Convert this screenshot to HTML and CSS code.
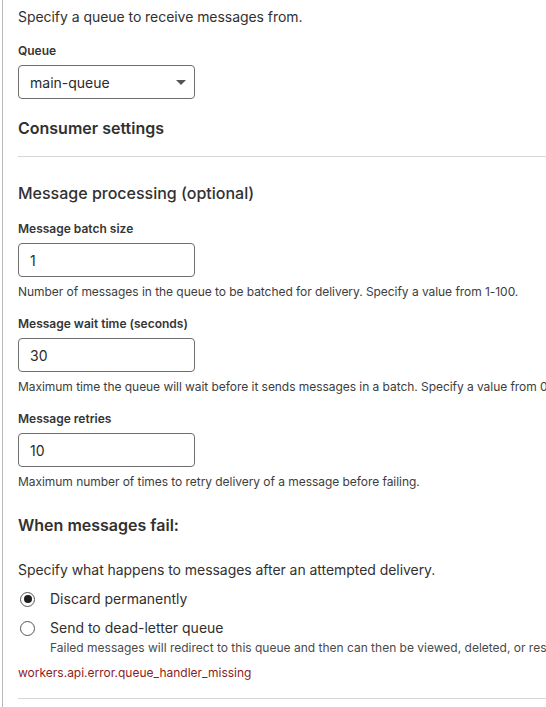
FILE: index.html
```html
<!DOCTYPE html>
<html>
<head>
<meta charset="utf-8">
<link rel="stylesheet" href="styles.css">
</head>
<body>
<div class="panel">
  <p class="intro">Specify a queue to receive messages from.</p>
  <div class="label lbl-queue">Queue</div>
  <div class="select">
    <span>main-queue</span>
    <svg class="caret" width="10" height="5" viewBox="0 0 10 5"><path d="M0 0 H10 L5 5 Z" fill="#555"/></svg>
  </div>
  <h2 class="h-consumer">Consumer settings</h2>
  <div class="divider d1"></div>
  <h2 class="h-proc">Message processing (optional)</h2>

  <div class="field">
    <div class="label">Message batch size</div>
    <div class="input">1</div>
    <div class="help">Number of messages in the queue to be batched for delivery. Specify a value from 1-100.</div>
  </div>
  <div class="field">
    <div class="label">Message wait time (seconds)</div>
    <div class="input">30</div>
    <div class="help">Maximum time the queue will wait before it sends messages in a batch. Specify a value from 0-60.</div>
  </div>
  <div class="field">
    <div class="label">Message retries</div>
    <div class="input">10</div>
    <div class="help">Maximum number of times to retry delivery of a message before failing.</div>
  </div>

  <h2 class="h-fail">When messages fail:</h2>
  <p class="intro2">Specify what happens to messages after an attempted delivery.</p>
  <div class="radio r1"><span class="dot checked"></span><span>Discard permanently</span></div>
  <div class="radio r2"><span class="dot"></span><span>Send to dead-letter queue</span></div>
  <div class="rdesc">Failed messages will redirect to this queue and then can then be viewed, deleted, or resent.</div>
  <div class="error">workers.api.error.queue_handler_missing</div>
  <div class="divider d2"></div>
</div>
</body>
</html>
```
FILE: styles.css
```css
html, body {
  margin: 0;
  padding: 0;
  background: #fff;
  overflow: hidden;
}
body {
  width: 546px;
  height: 707px;
  font-family: Inter, "Noto Sans", sans-serif;
  color: #313131;
}
.panel {
  margin-left: 2px;
  border-left: 1px solid #b8b8b8;
  padding-left: 15px;
  min-height: 707px;
  width: 700px;
  box-sizing: border-box;
  padding-top: 7px;
}
p { margin: 0; }
.intro {
  font-size: 14px;
  line-height: 20px;
  letter-spacing: -0.05px;
}
.label {
  font-size: 12px;
  line-height: 16px;
  font-weight: 600;
  color: #363636;
}
.lbl-queue { margin-top: 16px; }
.select, .input {
  box-sizing: border-box;
  width: 177px;
  height: 34px;
  border: 1px solid #6f6f6f;
  border-radius: 4px;
  margin-top: 6px;
  font-size: 14px;
  color: #2a2a2a;
  display: flex;
  align-items: center;
  padding-left: 11px;
}
.select {
  justify-content: space-between;
  padding-right: 8px;
}
.caret { margin-top: 1px; }
h2 {
  margin: 0;
  font-size: 16px;
  line-height: 22px;
  font-weight: 600;
  color: #313131;
}
.h-consumer { margin-top: 18px; }
.divider {
  height: 1px;
  background: #d6d6d6;
}
.d1 { margin-top: 17px; }
.h-proc { margin-top: 25px; font-weight: 500; }
.field { margin-top: 17px; }
.field + .field { margin-top: 16px; }
.help {
  margin-top: 7px;
  font-size: 12px;
  line-height: 16px;
  color: #3d3d3d;
  white-space: nowrap;
  letter-spacing: -0.05px;
}
.h-fail { margin-top: 24px; }
.intro2 {
  margin-top: 24px;
  font-size: 14px;
  line-height: 20px;
  letter-spacing: -0.05px;
}
.radio {
  display: flex;
  align-items: center;
  font-size: 14px;
  line-height: 20px;
  color: #2f2f2f;
  margin-top: 9px;
}
.dot {
  box-sizing: border-box;
  width: 15px;
  height: 15px;
  border: 1px solid #555;
  border-radius: 50%;
  margin-left: 2px;
  margin-right: 15px;
  display: flex;
  align-items: center;
  justify-content: center;
}
.dot.checked::after {
  content: "";
  width: 8px;
  height: 8px;
  border-radius: 50%;
  background: #1e1e1e;
}
.rdesc {
  margin-top: 2px;
  padding-left: 32px;
  font-size: 12px;
  line-height: 16px;
  color: #4a4a4a;
  white-space: nowrap;
}
.error {
  margin-top: 9px;
  font-size: 12px;
  line-height: 16px;
  color: #8c1c1c;
}
.d2 { margin-top: 17px; }
```
